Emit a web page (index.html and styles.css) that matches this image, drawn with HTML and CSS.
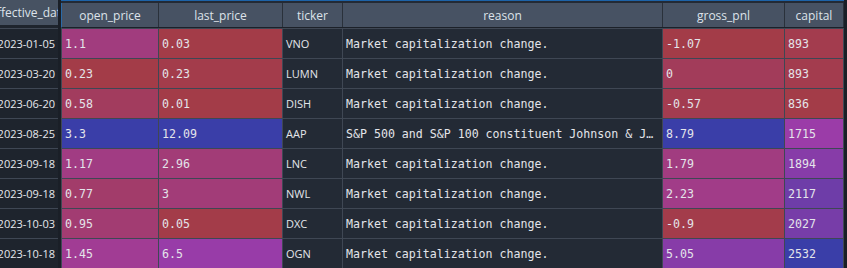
FILE: index.html
```html
<!DOCTYPE html>
<html>
<head>
<meta charset="utf-8">
<link rel="stylesheet" href="styles.css">
</head>
<body>
<div class="view">
  <div class="index">
    <div class="ih"><span>effective_date</span></div>
    <div class="ic"><span>2023-01-05</span></div>
    <div class="ic"><span>2023-03-20</span></div>
    <div class="ic"><span>2023-06-20</span></div>
    <div class="ic"><span>2023-08-25</span></div>
    <div class="ic"><span>2023-09-18</span></div>
    <div class="ic"><span>2023-09-18</span></div>
    <div class="ic"><span>2023-10-03</span></div>
    <div class="ic"><span>2023-10-18</span></div>
  </div>
  <div class="gap"></div>
  <div class="main">
    <div class="hrow">
      <div class="hc c1">open_price</div>
      <div class="hc c2">last_price</div>
      <div class="hc c3">ticker</div>
      <div class="hc c4">reason</div>
      <div class="hc c5">gross_pnl</div>
      <div class="hc c6">capital</div>
    </div>
    <div class="row">
      <div class="c c1 mono" style="background:rgb(161,60,126)">1.1</div>
      <div class="c c2 mono" style="background:rgb(163,60,72)">0.03</div>
      <div class="c c3 sans">VNO</div>
      <div class="c c4 mono">Market capitalization change.</div>
      <div class="c c5 mono" style="background:rgb(163,60,72)">-1.07</div>
      <div class="c c6 mono" style="background:rgb(163,60,78)">893</div>
    </div>
    <div class="row">
      <div class="c c1 mono" style="background:rgb(163,60,72)">0.23</div>
      <div class="c c2 mono" style="background:rgb(163,60,75)">0.23</div>
      <div class="c c3 sans">LUMN</div>
      <div class="c c4 mono">Market capitalization change.</div>
      <div class="c c5 mono" style="background:rgb(162,60,90)">0</div>
      <div class="c c6 mono" style="background:rgb(163,60,78)">893</div>
    </div>
    <div class="row">
      <div class="c c1 mono" style="background:rgb(162,60,94)">0.58</div>
      <div class="c c2 mono" style="background:rgb(163,60,72)">0.01</div>
      <div class="c c3 sans">DISH</div>
      <div class="c c4 mono">Market capitalization change.</div>
      <div class="c c5 mono" style="background:rgb(163,60,80)">-0.57</div>
      <div class="c c6 mono" style="background:rgb(163,60,72)">836</div>
    </div>
    <div class="row">
      <div class="c c1 mono" style="background:rgb(58,62,168)">3.3</div>
      <div class="c c2 mono" style="background:rgb(58,62,168)">12.09</div>
      <div class="c c3 sans">AAP</div>
      <div class="c c4 mono">S&amp;P 500 and S&amp;P 100 constituent Johnson &amp; J…</div>
      <div class="c c5 mono" style="background:rgb(58,62,168)">8.79</div>
      <div class="c c6 mono" style="background:rgb(155,60,168)">1715</div>
    </div>
    <div class="row">
      <div class="c c1 mono" style="background:rgb(161,60,131)">1.17</div>
      <div class="c c2 mono" style="background:rgb(162,60,119)">2.96</div>
      <div class="c c3 sans">LNC</div>
      <div class="c c4 mono">Market capitalization change.</div>
      <div class="c c5 mono" style="background:rgb(161,60,128)">1.79</div>
      <div class="c c6 mono" style="background:rgb(135,60,168)">1894</div>
    </div>
    <div class="row">
      <div class="c c1 mono" style="background:rgb(162,60,106)">0.77</div>
      <div class="c c2 mono" style="background:rgb(162,60,120)">3</div>
      <div class="c c3 sans">NWL</div>
      <div class="c c4 mono">Market capitalization change.</div>
      <div class="c c5 mono" style="background:rgb(161,60,136)">2.23</div>
      <div class="c c6 mono" style="background:rgb(110,61,168)">2117</div>
    </div>
    <div class="row">
      <div class="c c1 mono" style="background:rgb(162,60,114)">0.95</div>
      <div class="c c2 mono" style="background:rgb(163,60,73)">0.05</div>
      <div class="c c3 sans">DXC</div>
      <div class="c c4 mono">Market capitalization change.</div>
      <div class="c c5 mono" style="background:rgb(163,60,75)">-0.9</div>
      <div class="c c6 mono" style="background:rgb(119,61,168)">2027</div>
    </div>
    <div class="row">
      <div class="c c1 mono" style="background:rgb(161,60,148)">1.45</div>
      <div class="c c2 mono" style="background:rgb(152,60,168)">6.5</div>
      <div class="c c3 sans">OGN</div>
      <div class="c c4 mono">Market capitalization change.</div>
      <div class="c c5 mono" style="background:rgb(135,60,168)">5.05</div>
      <div class="c c6 mono" style="background:rgb(58,62,168)">2532</div>
    </div>
  </div>
  <div class="rstrip"></div>
</div>
</body>
</html>
```
FILE: styles.css
```css
html, body {
  margin: 0;
  padding: 0;
  background: #1c2129;
}
.view {
  display: flex;
  width: 847px;
  height: 268px;
  overflow: hidden;
  background: #1c2129;
}
.index {
  width: 58px;
  flex: none;
  display: flex;
  flex-direction: column;
  background: #1e242d;
}
.ih {
  height: 25px;
  margin-bottom: 3px;
  background: #475262;
  display: flex;
  justify-content: center;
  align-items: center;
  overflow: hidden;
  white-space: nowrap;
  font-family: "Open Sans", sans-serif;
  font-size: 12px;
  color: #dde2ea;
}
.ic {
  height: 29px;
  border-top: 1px solid #3f4754;
  display: flex;
  justify-content: flex-end;
  align-items: center;
  padding-right: 3px;
  overflow: hidden;
  white-space: nowrap;
  font-family: "Open Sans", sans-serif;
  font-size: 11px;
  color: #e6e8ec;
}
.ih span, .ic span { flex: none; }
.gap {
  width: 3px;
  flex: none;
  background: #1a1f27;
}
.main {
  width: 783px;
  flex: none;
  display: flex;
  flex-direction: column;
  border-top: 1px solid #1d63a8;
  padding-top: 2px;
  background: #232a35;
}
.hrow {
  display: flex;
  height: 24px;
  background: #475263;
  border-left: 1px solid #2a6aa8;
  border-bottom: 1px solid #1c2129;
}
.hc {
  box-sizing: border-box;
  border-right: 1px solid #2a313b;
  display: flex;
  justify-content: center;
  align-items: center;
  font-family: "Open Sans", sans-serif;
  font-size: 12px;
  color: #dde2ea;
  white-space: nowrap;
  overflow: hidden;
}
.row {
  display: flex;
  height: 29px;
  border-top: 1px solid #3f4754;
  border-left: 1px solid #3f4754;
}
.c {
  box-sizing: border-box;
  border-right: 1px solid #3f4754;
  display: flex;
  align-items: center;
  padding-left: 3px;
  white-space: nowrap;
  overflow: hidden;
  color: #e4e5ea;
}
.mono {
  font-family: "DejaVu Sans Mono", monospace;
  font-size: 11.6px;
}
.sans {
  font-family: "Open Sans", sans-serif;
  font-size: 11px;
}
.c1 { width: 97px; }
.c2 { width: 124px; }
.c3 { width: 60px; }
.c4 { width: 320px; }
.c5 { width: 122px; }
.c6 { width: 59px; }
.rstrip {
  flex: none;
  width: 3px;
  background: #1a1f27;
}
```
